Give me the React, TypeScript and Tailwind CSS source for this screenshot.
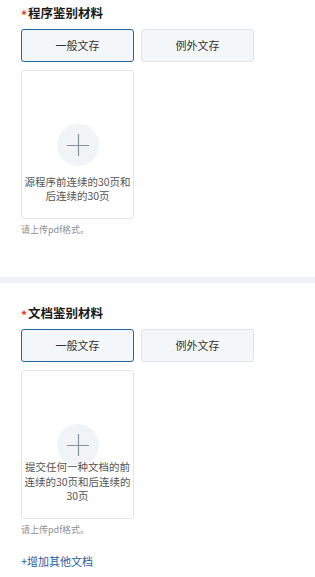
import React from "react";

const font = { fontFamily: '"Noto Sans CJK SC", "Noto Sans", sans-serif' };

function Plus() {
  return (
    <div className="w-[42px] h-[42px] rounded-full bg-[#f1f4f6] flex items-center justify-center">
      <svg width="22" height="22" viewBox="0 0 22 22">
        <path d="M0 11.5H22M11.5 0V22" stroke="#8793a0" strokeWidth="1.2" />
      </svg>
    </div>
  );
}

function Section({ title, desc }: { title: string; desc: string }) {
  return (
    <div className="pl-[21px]">
      <div className="flex items-center h-[20px]">
        <span className="text-[#e8372a] text-[12px] leading-none mr-[1px] mt-[3px] font-bold">*</span>
        <span className="text-[12.5px] font-bold text-[#1b1b1b] leading-[20px]">{title}</span>
      </div>
      <div className="flex gap-[7px] mt-[6px]">
        <div className="w-[113px] h-[33px] rounded-[3px] border border-[#2166ab] bg-[#f4f7f9] flex items-center justify-center text-[11px] text-[#333]">
          一般文存
        </div>
        <div className="w-[113px] h-[33px] rounded-[3px] border border-[#dfe4e8] bg-[#f4f7f9] flex items-center justify-center text-[11px] text-[#333]">
          例外文存
        </div>
      </div>
      <div className="mt-[8px] w-[113px] h-[149px] rounded-[3px] border border-[#e1e5e8] grid">
        <div className="row-start-1 col-start-1 self-start justify-self-center mt-[53px]">
          <Plus />
        </div>
        <div className="row-start-1 col-start-1 self-end mb-[14px] text-[10.5px] leading-[14.7px] text-[#555] text-center">
          {desc}
        </div>
      </div>
      <div className="mt-[5px] text-[9px] leading-[12px] text-[#8a8f94]">请上传pdf格式。</div>
    </div>
  );
}

export default function App() {
  return (
    <div className="w-[315px] h-[577px] bg-white overflow-hidden" style={font}>
      <div className="pt-[3px]">
        <Section title="程序鉴别材料" desc="源程序前连续的30页和后连续的30页" />
      </div>
      <div className="mt-[41px] h-[6px] bg-[#f1f4f7]" />
      <div className="pt-[20px]">
        <Section title="文档鉴别材料" desc="提交任何一种文档的前连续的30页和后连续的30页" />
        <div className="pl-[21px] mt-[18px] text-[11px] leading-[14px] text-[#1d5ca5]">+增加其他文档</div>
      </div>
    </div>
  );
}
